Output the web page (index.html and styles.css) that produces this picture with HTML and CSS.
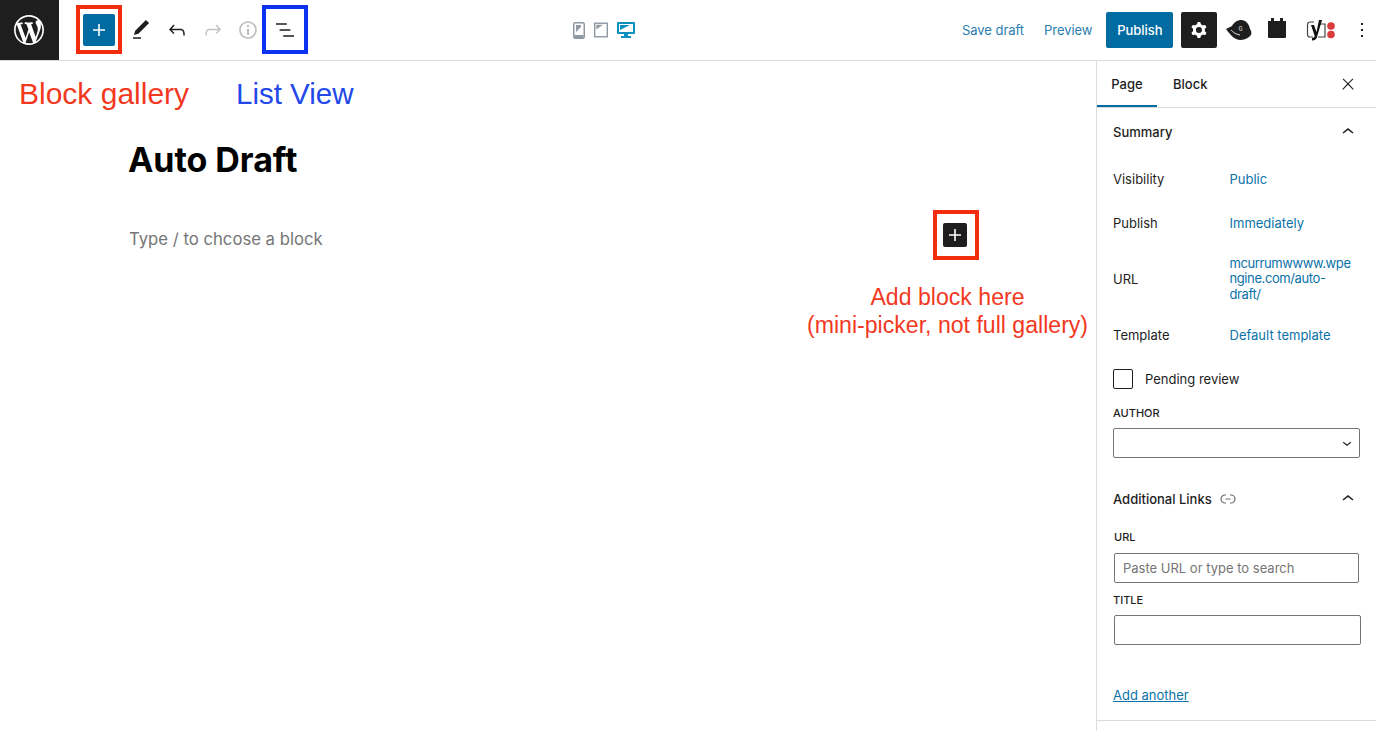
FILE: index.html
```html
<!DOCTYPE html>
<html lang="en">
<head>
<meta charset="utf-8">
<title>Auto Draft</title>
<link rel="stylesheet" href="styles.css">
</head>
<body>
<header class="topbar">
  <div class="topbar-left">
    <a class="wp-logo"><svg viewBox="0 0 20 20" width="30" height="30"><path fill="#fff" d="M20 10c0-5.51-4.49-10-10-10C4.48 0 0 4.49 0 10c0 5.52 4.48 10 10 10 5.51 0 10-4.48 10-10zM7.78 15.37L4.37 6.22c.55-.02 1.17-.08 1.17-.08.5-.06.44-1.13-.06-1.11 0 0-1.45.11-2.37.11-.18 0-.37 0-.58-.01C4.12 2.69 6.87 1.11 10 1.11c2.33 0 4.45.87 6.05 2.34-.68-.11-1.65.39-1.65 1.58 0 .74.45 1.36.9 2.1.35.61.55 1.36.55 2.46 0 1.49-1.4 5-1.4 5l-3.03-8.37c.54-.02.82-.17.82-.17.5-.05.44-1.25-.06-1.22 0 0-1.44.12-2.38.12-.87 0-2.33-.12-2.33-.12-.5-.03-.56 1.2-.06 1.22l.92.08 1.26 3.41zM17.41 10c.24-.64.74-1.87.43-4.25.7 1.29 1.05 2.71 1.05 4.25 0 3.29-1.73 6.24-4.4 7.78.97-2.59 1.94-5.2 2.92-7.78zM6.1 18.09C3.12 16.65 1.11 13.53 1.11 10c0-1.3.23-2.48.72-3.59C3.25 10.3 4.67 14.2 6.1 18.09zm4.03-6.63l2.58 6.98c-.86.29-1.76.45-2.71.45-.79 0-1.57-.11-2.29-.33.81-2.38 1.62-4.74 2.42-7.1z"/></svg></a>
    <div class="tools">
      <span class="tool tool-add">
        <svg viewBox="0 0 24 24" width="24" height="24"><path fill="#fff" d="M18 11.2h-5.2V6h-1.6v5.2H6v1.6h5.2V18h1.6v-5.2H18z"/></svg>
        <span class="mark mark-red"></span>
      </span>
      <span class="tool"><svg viewBox="0 0 24 24" width="24" height="24"><path fill="#1e1e1e" d="M20.1 5.1L16.9 2 6.2 12.7l-1.3 4.4 4.5-1.3L20.1 5.1zM4 20.8h8v-1.5H4v1.5z"/></svg></span>
      <span class="tool"><svg viewBox="0 0 24 24" width="24" height="24"><path fill="#1e1e1e" d="M18.3 11.7c-.6-.6-1.4-.9-2.3-.9H6.7l2.9-3.3-1.1-1-4.5 5L8.5 16l1-1-2.7-2.7H16c.5 0 .9.2 1.3.5 1 1 1 3.4 1 4.5v.3h1.5v-.2c0-1.5 0-4.3-1.5-5.7z"/></svg></span>
      <span class="tool tool-redo"><svg viewBox="0 0 24 24" width="24" height="24"><path fill="#c4c4c4" d="M15.6 6.5l-1.1 1 2.9 3.3H8c-.9 0-1.7.3-2.3.9-1.4 1.5-1.4 4.2-1.4 5.6v.2h1.5v-.3c0-1.1 0-3.5 1-4.5.3-.3.7-.5 1.3-.5h9.2L14.5 15l1.1 1.1 4.6-4.6-4.6-5z"/></svg></span>
      <span class="tool tool-info"><svg viewBox="0 0 24 24" width="24" height="24"><path fill="#bdbdbd" d="M12 3.2c-4.8 0-8.8 3.9-8.8 8.8 0 4.8 3.9 8.8 8.8 8.8 4.8 0 8.8-3.9 8.8-8.8 0-4.8-4-8.8-8.8-8.8zm0 16c-4 0-7.2-3.3-7.2-7.2C4.8 8 8 4.8 12 4.8s7.2 3.3 7.2 7.2c0 4-3.2 7.2-7.2 7.2zM11 17h2v-6h-2v6zm0-8h2V7h-2v2z"/></svg></span>
      <span class="tool tool-list">
        <svg viewBox="0 0 24 24" width="24" height="24"><path fill="#1e1e1e" d="M13.8 5.2H3v1.5h10.8V5.2zm-3.6 12v1.5H21v-1.5H10.2zm7.2-6H6.6v1.5h10.8v-1.5z"/></svg>
        <span class="mark mark-blue"></span>
      </span>
    </div>
  </div>
  <div class="devices">
    <svg viewBox="0 0 12 17" width="12" height="17"><rect x="0.75" y="0.75" width="10.5" height="15.5" rx="1.5" fill="#fff" stroke="#8f98a1" stroke-width="1.5"/><rect x="1.5" y="13" width="9" height="3" fill="#8f98a1"/><path fill="#8f98a1" d="M3 3h5v2L3 10z"/></svg>
    <svg viewBox="0 0 15 16" width="14" height="16"><rect x="0.75" y="0.75" width="13.5" height="14.5" fill="#fff" stroke="#8f98a1" stroke-width="1.5"/><path fill="#8f98a1" d="M2.5 2.5h7l-7 5z"/></svg>
    <svg viewBox="0 0 18 17" width="18" height="17"><path fill="#0a8fbe" d="M0 1a1 1 0 011-1h16a1 1 0 011 1v10a1 1 0 01-1 1h-6v2h3v2H4v-2h3v-2H1a1 1 0 01-1-1z"/><rect x="2" y="2" width="14" height="8" fill="#fff"/><path fill="#0a8fbe" d="M3 3h10L3 8z"/></svg>
  </div>
  <div class="topbar-right">
    <a class="link-btn link-save">Save draft</a>
    <a class="link-btn link-preview">Preview</a>
    <a class="publish">Publish</a>
    <span class="settings"><svg viewBox="0 0 24 24" width="24" height="24"><path fill="#fff" fill-rule="evenodd" d="M10.289 4.836A1 1 0 0111.275 4h1.306a1 1 0 01.987.836l.244 1.466c.787.26 1.503.679 2.108 1.218l1.393-.522a1 1 0 011.216.437l.653 1.13a1 1 0 01-.23 1.273l-1.148.944a6.025 6.025 0 010 2.435l1.149.946a1 1 0 01.23 1.272l-.653 1.13a1 1 0 01-1.216.437l-1.394-.522c-.605.54-1.32.958-2.108 1.218l-.244 1.466a1 1 0 01-.987.836h-1.306a1 1 0 01-.986-.836l-.244-1.466a5.995 5.995 0 01-2.108-1.218l-1.394.522a1 1 0 01-1.217-.436l-.653-1.131a1 1 0 01.23-1.272l1.149-.946a6.026 6.026 0 010-2.435l-1.148-.944a1 1 0 01-.23-1.272l.653-1.131a1 1 0 011.217-.437l1.393.522a5.994 5.994 0 012.108-1.218l.244-1.466zM14.929 12a3 3 0 11-6 0 3 3 0 016 0z"/></svg></span>
    <span class="plugin plugin-hat"><svg viewBox="0 0 26 21" width="26" height="21"><path fill="#1e1e1e" d="M0 9l6-3c2-4 6-6 9-6 5 0 8 4 9 9 2 3 2 6-1 8-4 3-9 4-13 2-4-2-7-6-10-10z"/><path fill="none" stroke="#fff" stroke-width="0.900" d="M5 10c2 2 4 4 9 5"/><text x="12.500" y="11" class="hat-g">G</text></svg></span>
    <span class="plugin plugin-cal"><svg viewBox="0 0 18 20" width="18" height="20"><path fill="#1e1e1e" d="M0 3h3V0h3v3h6V0h3v3h3v16a1 1 0 01-1 1H1a1 1 0 01-1-1z"/></svg></span>
    <span class="plugin plugin-yoast"><svg viewBox="0 0 30 22" width="30" height="22"><path fill="none" stroke="#444" stroke-width="1.2" d="M8 3H4a2.500 2.500 0 00-2.500 2.500v10A2.500 2.500 0 004 18h3M14 5h5v13h-7"/><path fill="#111" d="M5 6h3l2.500 7L13 1h3l-5 17c-.6 2-2 3.500-5 3.500v-2.500c1.500 0 2.300-.6 2.700-2z"/><circle cx="25" cy="7" r="3.800" fill="#d93a3a"/><circle cx="25" cy="15.500" r="3.800" fill="#d93a3a"/></svg></span>
    <span class="plugin plugin-more"><svg viewBox="0 0 24 24" width="24" height="24"><path fill="#1e1e1e" d="M13 19h-2v-2h2v2zm0-6h-2v-2h2v2zm0-6h-2V5h2v2z"/></svg></span>
  </div>
</header>

<div class="workspace">
  <main class="canvas">
    <h1 class="post-title">Auto Draft</h1>
    <div class="block-row">
      <p class="placeholder">Type / to chcose a block</p>
      <span class="mini-add">
        <svg viewBox="0 0 24 24" width="24" height="24"><path fill="#fff" d="M18 11.200h-5.200V6h-1.600v5.200H6v1.600h5.200V18h1.600v-5.200H18z"/></svg>
        <span class="mark mark-red mark-mini"></span>
      </span>
    </div>
    <span class="note note-gallery">Block gallery</span>
    <span class="note note-list">List View</span>
    <span class="note note-add">Add block here<br>(mini-picker, not full gallery)</span>
  </main>

  <aside class="sidebar">
    <div class="tabs">
      <span class="tab tab-active">Page</span>
      <span class="tab">Block</span>
      <svg class="tabs-close" viewBox="0 0 24 24" width="24" height="24"><path fill="#1e1e1e" d="M13 11.800l6.100-6.300-1-1-6.100 6.200-6.100-6.200-1 1 6.100 6.300-6.500 6.700 1 1 6.500-6.600 6.500 6.600 1-1z"/></svg>
    </div>
    <section class="panel-summary">
      <div class="panel-head">
        <span class="panel-title">Summary</span>
        <svg class="chev" viewBox="0 0 24 24" width="24" height="24"><path fill="#1e1e1e" d="M6.500 12.400L12 8l5.500 4.400-.9 1.200L12 10l-4.500 3.600-1-1.200z"/></svg>
      </div>
      <div class="row"><span class="row-label">Visibility</span><a class="row-value">Public</a></div>
      <div class="row"><span class="row-label">Publish</span><a class="row-value">Immediately</a></div>
      <div class="row row-url"><span class="row-label">URL</span><a class="row-value row-value-url">mcurrumwwww.wpe<br>ngine.com/auto-<br>draft/</a></div>
      <div class="row"><span class="row-label">Template</span><a class="row-value">Default template</a></div>
      <label class="check"><span class="check-box"></span><span>Pending review</span></label>
      <div class="field-label author-label">AUTHOR</div>
      <div class="select"><svg viewBox="0 0 24 24" width="18" height="18"><path fill="#1e1e1e" d="M17.500 11.600L12 16l-5.500-4.400.9-1.200L12 14l4.500-3.600 1 1.200z"/></svg></div>
    </section>
    <section class="panel-links">
      <div class="panel-head links-head">
        <span class="panel-title">Additional Links</span>
        <svg class="link-icon" viewBox="0 0 16 10" width="16" height="10"><path fill="none" stroke="#6b6b6b" stroke-width="1.200" d="M6 1H5a4 4 0 000 8h1M10 1h1a4 4 0 010 8h-1M5.500 5h5"/></svg>
        <svg class="chev" viewBox="0 0 24 24" width="24" height="24"><path fill="#1e1e1e" d="M6.500 12.400L12 8l5.500 4.400-.9 1.200L12 10l-4.500 3.600-1-1.200z"/></svg>
      </div>
      <div class="field-label url-label">URL</div>
      <div class="text-input input-url">Paste URL or type to search</div>
      <div class="field-label title-label">TITLE</div>
      <div class="text-input input-title"></div>
    </section>
    <a class="add-another">Add another</a>
    <div class="sidebar-end"></div>
  </aside>
</div>
</body>
</html>
```
FILE: styles.css
```css
* { box-sizing: border-box; }
html, body { margin: 0; height: 100%; overflow: hidden; background: #fff; }
body { font-family: Inter, "Liberation Sans", sans-serif; font-size: 13px; color: #1e1e1e; }

.topbar { height: 61px; border-bottom: 1px solid #dcdcdc; display: flex; align-items: center; }
.topbar-left { display: flex; align-items: center; width: 566px; height: 60px; }
.wp-logo { width: 59px; height: 60px; background: #1e1e1e; display: flex; align-items: center; justify-content: center; padding-right: 1px; }
.tools { display: flex; align-items: center; margin-left: 24px; }
.tool { width: 24px; height: 32px; display: flex; align-items: center; justify-content: center; margin-right: 12px; position: relative; }
.tool-add { width: 32px; background: #006ba1; border-radius: 2px; margin-right: 14px; }
.tool-redo { margin-right: 11px; }
.tool-info { margin-right: 13px; }
.mark { position: absolute; border: 4px solid; pointer-events: none; }
.mark-red { border-color: #f22c0c; left: -7px; right: -7px; top: -9px; bottom: -8px; }
.mark-blue { border-color: #0a32f0; left: -11px; right: -11px; top: -9px; bottom: -8px; }
.devices { display: flex; align-items: center; gap: 9px; width: 380px; padding-left: 7px; height: 16px; }

.topbar-right { display: flex; align-items: center; margin-left: 16px; flex: 1; }
.link-btn { color: #2c7db0; white-space: nowrap; letter-spacing: -0.05px; }
.link-save { margin-right: 20px; }
.link-preview { margin-right: 14px; }
.publish { width: 67px; height: 36px; background: #006ba1; color: #fff; font-weight: 500; border-radius: 2px; display: flex; align-items: center; justify-content: center; margin-right: 8px; }
.settings { width: 36px; height: 36px; background: #1e1e1e; border-radius: 2px; display: flex; align-items: center; justify-content: center; margin-right: 8px; }
.plugin { display: flex; align-items: center; justify-content: center; }
.plugin-hat { width: 28px; margin-right: 15px; }
.hat-g { font-family: Inter, sans-serif; font-size: 5.500px; font-weight: 700; fill: #bbb; }
.plugin-cal { width: 18px; margin-right: 20px; margin-top: -4px; }
.plugin-yoast { width: 30px; margin-right: 14px; }
.plugin-more { width: 24px; }

.workspace { display: flex; height: 670px; }
.canvas { width: 1096px; position: relative; padding: 79px 0 0 129px; }
.post-title { margin: 0 0 0 -1px; font-size: 34px; line-height: 40px; font-weight: 700; color: #000; letter-spacing: -0.05px; }
.block-row { display: flex; align-items: center; justify-content: space-between; width: 838px; margin-top: 38px; }
.placeholder { margin: 9px 0 0; font-size: 16.700px; line-height: 24px; color: #757575; }
.mini-add { width: 24px; height: 24px; background: #1e1e1e; border-radius: 2px; position: relative; display: block; }
.mini-add svg { display: block; }
.mark-mini { left: -10px; right: -12px; top: -13px; bottom: -13px; }

.note { position: absolute; font-family: "Liberation Sans", Arial, sans-serif; white-space: nowrap; }
.note-gallery { left: 19px; top: 15px; font-size: 30px; line-height: 36px; color: #f2391f; }
.note-list { left: 236px; top: 15px; font-size: 29.500px; line-height: 36px; color: #2348e8; }
.note-add { left: 807px; top: 222px; width: 281px; text-align: center; font-size: 23.100px; line-height: 28px; color: #f2391f; }

.sidebar { width: 280px; border-left: 1px solid #dcdcdc; display: flex; flex-direction: column; }
.tabs { height: 47px; border-bottom: 1px solid #dcdcdc; display: flex; align-items: center; position: relative; }
.tab { font-weight: 500; height: 46px; display: flex; align-items: center; }
.tab:first-child { width: 60px; justify-content: center; }
.tab-active { box-shadow: inset 0 -2px 0 #006ba1; }
.tab + .tab { margin-left: 16px; }
.tabs-close { margin-left: auto; margin-right: 19px; width: 18px; height: 18px; }

.panel-summary { padding: 0 16px; }
.panel-head { display: flex; align-items: center; justify-content: space-between; height: 49px; padding-bottom: 2px; }
.panel-title { font-weight: 500; }
.chev { flex: none; }
.row { display: flex; align-items: center; height: 44px; }
.row-url { height: 68px; }
.row-label { width: 116.500px; flex: none; }
.row-value { color: #0b72a8; }
.row-value-url { line-height: 15.500px; letter-spacing: -0.4px; }
.check { display: flex; align-items: center; gap: 12px; height: 44px; }
.check-box { width: 20px; height: 20px; border: 1px solid #1e1e1e; border-radius: 2px; }
.field-label { font-size: 11px; font-weight: 500; line-height: 14px; }
.author-label { margin-top: 5px; }
.select { width: 247px; height: 30px; margin-top: 8px; border: 1px solid #757575; border-radius: 2px; display: flex; align-items: center; justify-content: flex-end; padding-right: 3px; }

.panel-links { margin-top: 14px; box-shadow: -1px 0 0 #dcdcdc; padding: 0 16px 28px; }
.links-head { height: 54px; justify-content: flex-start; padding-bottom: 0; }
.link-icon { margin-left: 8px; }
.links-head .chev { margin-left: auto; }
.url-label { margin: 4px 0 0 1px; }
.title-label { margin-top: 10px; }
.text-input { height: 30px; border: 1px solid #757575; border-radius: 2px; margin-left: 1px; display: flex; align-items: center; padding-left: 8px; color: #757575; }
.input-url { width: 245px; margin-top: 9px; }
.input-title { width: 247px; margin-top: 8px; }
.add-another { color: #0b72a8; text-decoration: underline; margin: 14px 0 0 16px; line-height: 16px; }
.sidebar-end { margin-top: 17px; border-top: 1px solid #dcdcdc; }
```
